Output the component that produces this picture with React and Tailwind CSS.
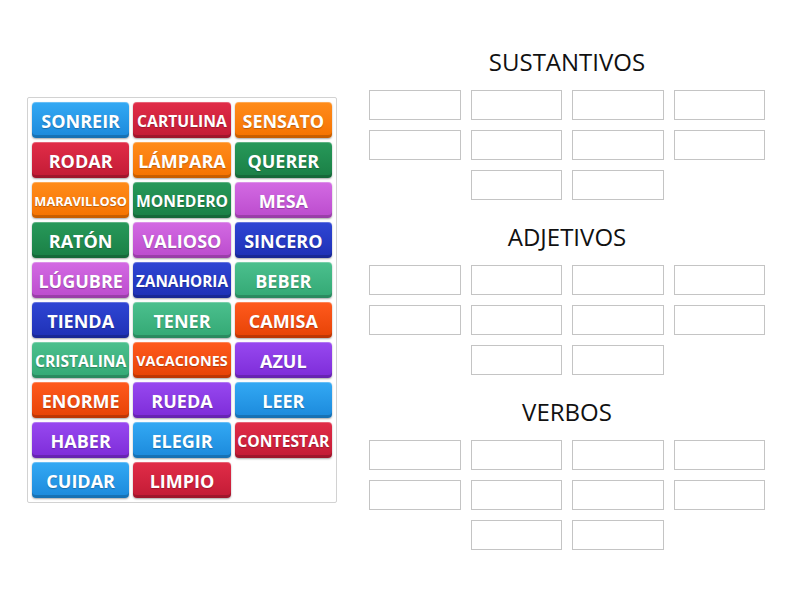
const tones = {
  sky: 'from-[#33a9f4] to-[#1b89db]',
  crimson: 'from-[#e12d48] to-[#c21a35]',
  orange: 'from-[#ff8c1a] to-[#f57200]',
  forest: 'from-[#27995a] to-[#1a7f45]',
  orchid: 'from-[#d36ae3] to-[#bb4bcd]',
  royal: 'from-[#2f46d4] to-[#1e30b5]',
  mint: 'from-[#4bc08e] to-[#33a874]',
  flame: 'from-[#ff5a1c] to-[#e64204]',
  violet: 'from-[#9848f0] to-[#7d2bd8]',
}

const words = [
  ['SONREIR', 'sky'], ['CARTULINA', 'crimson', '15.7px'], ['SENSATO', 'orange'],
  ['RODAR', 'crimson'], ['LÁMPARA', 'orange'], ['QUERER', 'forest'],
  ['MARAVILLOSO', 'orange', '12.8px'], ['MONEDERO', 'forest', '15.7px'], ['MESA', 'orchid'],
  ['RATÓN', 'forest'], ['VALIOSO', 'orchid'], ['SINCERO', 'royal'],
  ['LÚGUBRE', 'orchid'], ['ZANAHORIA', 'royal', '15.3px'], ['BEBER', 'mint'],
  ['TIENDA', 'royal'], ['TENER', 'mint'], ['CAMISA', 'flame'],
  ['CRISTALINA', 'mint', '15.6px'], ['VACACIONES', 'flame', '14.4px'], ['AZUL', 'violet'],
  ['ENORME', 'flame'], ['RUEDA', 'violet'], ['LEER', 'sky'],
  ['HABER', 'violet'], ['ELEGIR', 'sky'], ['CONTESTAR', 'crimson', '15.7px'],
  ['CUIDAR', 'sky'], ['LIMPIO', 'crimson'],
]

const groups = ['SUSTANTIVOS', 'ADJETIVOS', 'VERBOS']

function Tile({ text, tone, size }) {
  return (
    <div
      className={`h-9 flex items-center justify-center rounded-[4px] bg-linear-to-b ${tones[tone]} text-white font-bold whitespace-nowrap leading-none shadow-[inset_0_-3px_0_rgba(0,0,0,0.18),inset_0_1px_0_rgba(255,255,255,0.25),0_1px_2px_rgba(0,0,0,0.35)] [text-shadow:0_1px_1px_rgba(0,0,0,0.25)] ${size ? 'pt-[3px]' : 'pt-[2px]'}`}
      style={size ? { fontSize: size } : undefined}
    >
      <span className={size ? '' : 'text-[18px]'}>{text}</span>
    </div>
  )
}

function DropGroup({ title }) {
  return (
    <div>
      <h2 className="h-8 leading-8 text-center text-[24px] text-[#111]">{title}</h2>
      <div className="mt-3 grid grid-cols-4 gap-x-[10px] gap-y-[10px]">
        {[0, 1, 2, 3, 4, 5, 6, 7].map((i) => (
          <div key={i} className="h-[30px] border border-[#c4c4c4] bg-white" />
        ))}
        <div className="col-start-2 h-[30px] border border-[#c4c4c4] bg-white" />
        <div className="h-[30px] border border-[#c4c4c4] bg-white" />
      </div>
    </div>
  )
}

export default function App() {
  return (
    <div className="w-[800px] h-[600px] bg-white flex font-['Open_Sans',sans-serif]">
      <div className="ml-[27px] mt-[97px] self-start w-[310px] border border-[#d2d2d2] rounded-[2px] p-1">
        <div className="grid grid-cols-3 gap-1">
          {words.map(([text, tone, size]) => (
            <Tile key={text} text={text} tone={tone} size={size} />
          ))}
        </div>
      </div>
      <div className="ml-[32px] mt-[46px] w-[396px] flex flex-col gap-[21px]">
        {groups.map((g) => (
          <DropGroup key={g} title={g} />
        ))}
      </div>
    </div>
  )
}
